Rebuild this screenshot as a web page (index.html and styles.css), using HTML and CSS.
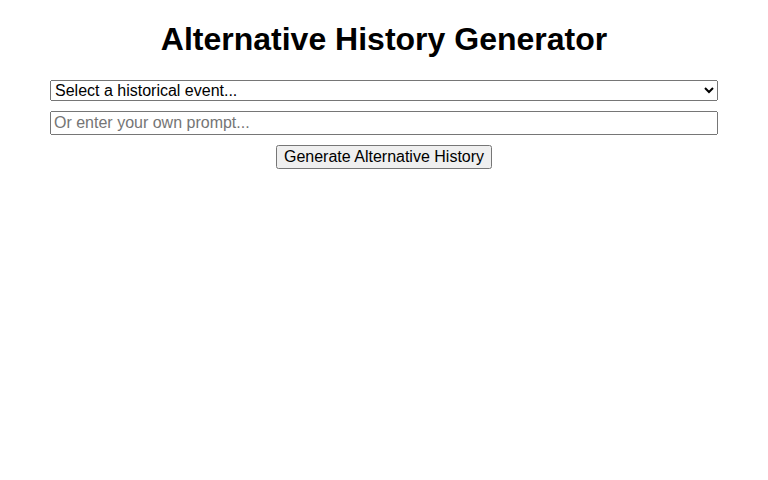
FILE: index.html
```html
<!DOCTYPE html>
<html lang="en">
<head>
  <meta charset="utf-8">
  <title>Alternative History Generator</title>
  <link rel="stylesheet" href="styles.css">
</head>
<body>
  <div class="container">
    <h1>Alternative History Generator</h1>
    <select id="event-select" class="field">
      <option value="">Select a historical event...</option>
      <option value="rome">The fall of Rome</option>
      <option value="columbus">Columbus reaches the Americas</option>
      <option value="moon">The Moon landing</option>
    </select>
    <input type="text" id="custom-prompt" class="field" placeholder="Or enter your own prompt...">
    <div class="actions">
      <button id="generate">Generate Alternative History</button>
    </div>
    <div id="result"></div>
  </div>
</body>
</html>
```

FILE: styles.css
```css
body {
  margin: 0;
  font-family: "Liberation Sans", Arial, sans-serif;
  color: #000;
  background: #fff;
}

.container {
  padding: 0 50px;
}

h1 {
  text-align: center;
  font-size: 32px;
  margin: 21px 0 22px;
}

.field {
  display: block;
  width: 100%;
  box-sizing: border-box;
  font-family: inherit;
  font-size: 16px;
  margin-bottom: 10px;
}

.actions {
  text-align: center;
}

.actions button {
  font-family: inherit;
  font-size: 16px;
}
```
